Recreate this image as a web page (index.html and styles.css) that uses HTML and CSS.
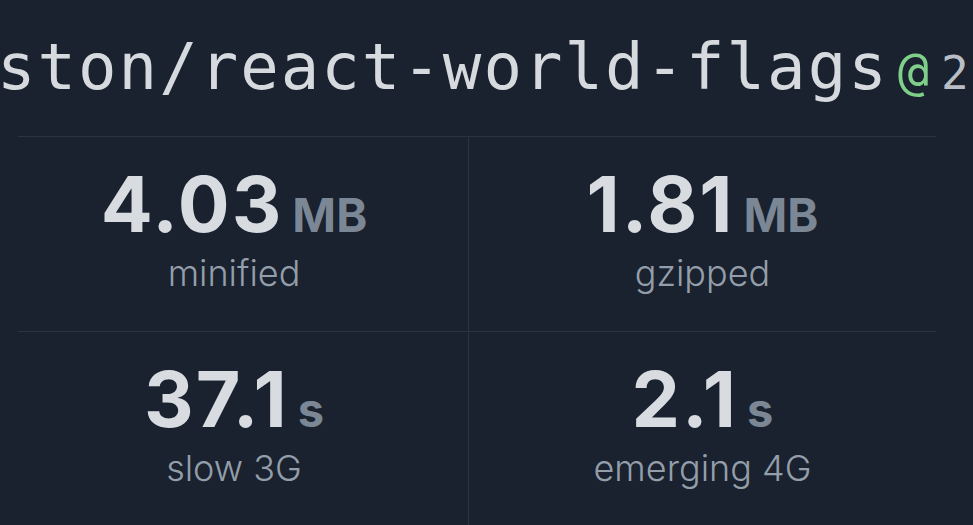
FILE: index.html
```html
<!DOCTYPE html>
<html lang="en">
<head>
<meta charset="utf-8">
<title>react-world-flags</title>
<link rel="stylesheet" href="styles.css">
</head>
<body>
<header class="title">
  <span class="pkg">ston/react-world-flags</span><span class="at">@</span><span class="ver">2</span>
</header>
<section class="stats">
  <div class="stat stat--left">
    <div class="value"><span class="num">4.03</span><span class="unit">MB</span></div>
    <div class="label">minified</div>
  </div>
  <div class="stat stat--right">
    <div class="value"><span class="num">1.81</span><span class="unit">MB</span></div>
    <div class="label">gzipped</div>
  </div>
  <div class="stat stat--left">
    <div class="value"><span class="num">37.1</span><span class="unit">s</span></div>
    <div class="label">slow 3G</div>
  </div>
  <div class="stat stat--right">
    <div class="value"><span class="num">2.1</span><span class="unit">s</span></div>
    <div class="label">emerging 4G</div>
  </div>
</section>
</body>
</html>
```

FILE: styles.css
```css
html, body {
  margin: 0;
  padding: 0;
  background: #19222e;
  overflow: hidden;
}

body {
  width: 973px;
  height: 525px;
}

.title {
  height: 136px;
  box-sizing: border-box;
  padding-top: 35px;
  display: flex;
  align-items: baseline;
  white-space: nowrap;
  margin-left: -3px;
  line-height: 1;
  font-family: "DejaVu Sans Mono", "Liberation Mono", monospace;
}

.pkg {
  font-size: 64px;
  letter-spacing: 2px;
  color: #d6dade;
}

.at {
  font-size: 52px;
  color: #7fcf8a;
  margin-left: 9px;
}

.ver {
  font-size: 46px;
  color: #b9bec5;
  margin-left: 12px;
}

.stats {
  display: grid;
  grid-template-columns: 468px 468px;
  width: 936px;
}

.stat {
  height: 195px;
  box-sizing: border-box;
  padding-top: 30px;
  display: flex;
  flex-direction: column;
  align-items: center;
  font-family: Inter, "Noto Sans", sans-serif;
  background: linear-gradient(#2a3441, #2a3441) no-repeat;
}

.stat--left {
  background-position: 18px 0;
  background-size: calc(100% - 18px) 1px;
}

.stat--right {
  background-position: 0 0;
  background-size: 100% 1px;
  border-left: 1px solid #2a3441;
}

.value {
  display: flex;
  align-items: baseline;
  line-height: 1;
}

.num {
  font-size: 77px;
  font-weight: 700;
  color: #d8dce1;
  letter-spacing: 2px;
}

.unit {
  font-size: 47px;
  font-weight: 700;
  color: #7c8796;
  margin-left: 9px;
}

.label {
  margin-top: 12px;
  font-size: 36px;
  font-weight: 300;
  line-height: 1;
  color: #949eaa;
}
```
